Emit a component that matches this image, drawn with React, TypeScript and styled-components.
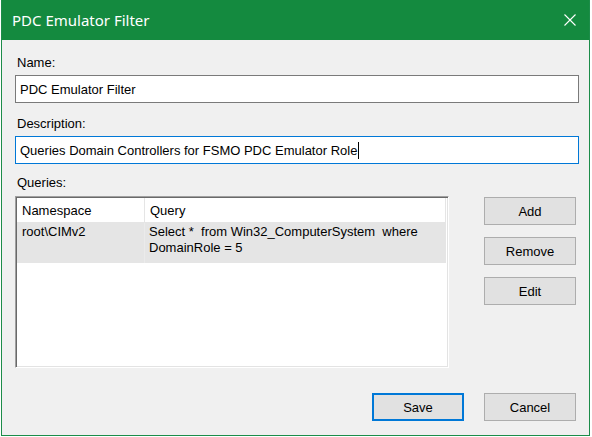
import React from 'react';
import styled, { createGlobalStyle } from 'styled-components';

const GlobalStyle = createGlobalStyle`
  html, body {
    margin: 0;
    padding: 0;
    background: #fff;
  }
  * {
    box-sizing: border-box;
  }
`;

const Window = styled.div`
  width: 589px;
  height: 436px;
  margin-left: 1px;
  border: 1px solid #1c8c49;
  border-top: none;
  background: #f0f0f0;
  display: flex;
  flex-direction: column;
  font-family: "Liberation Sans", Arial, sans-serif;
  font-size: 13px;
  color: #000;
`;

const TitleBar = styled.div`
  height: 40px;
  flex-shrink: 0;
  background: #148a3f;
  display: flex;
  align-items: center;
  justify-content: space-between;
  padding: 0 13px 0 10px;
`;

const Title = styled.span`
  font-family: "Noto Sans", "Open Sans", sans-serif;
  font-size: 15px;
  color: #fff;
  margin-top: -1px;
`;

const CloseIcon = styled.svg`
  width: 12px;
  height: 12px;
  display: block;
`;

const Body = styled.div`
  flex: 1;
  display: flex;
  flex-direction: column;
  padding: 15px 10px 0 13px;
`;

const Label = styled.div<{ $gap?: number }>`
  line-height: 16px;
  margin-top: ${p => p.$gap ?? 0}px;
  margin-left: 2px;
`;

const TextBox = styled.div<{ $focused?: boolean }>`
  height: 28px;
  margin-top: 4px;
  background: #fff;
  border: 1px solid ${p => (p.$focused ? '#0078d7' : '#7a7a7a')};
  display: flex;
  align-items: center;
  padding-left: 4px;
  white-space: nowrap;
`;

const Caret = styled.span`
  display: inline-block;
  width: 1px;
  height: 17px;
  background: #000;
  margin-left: 1px;
`;

const QueriesArea = styled.div`
  display: flex;
  margin-top: 5px;
`;

const ListView = styled.div`
  width: 434px;
  height: 172px;
  background: #fff;
  border-top: 1px solid #a0a0a0;
  border-left: 1px solid #a0a0a0;
  border-right: 1px solid #fff;
  border-bottom: 1px solid #fff;
  box-shadow: inset 1px 1px 0 #696969, inset -1px -1px 0 #e3e3e3;
  padding: 1px 1px 0 1px;
  display: flex;
  flex-direction: column;
`;

const ListHeader = styled.div`
  display: flex;
  height: 25px;
  border-bottom: 1px solid #e5e5e5;
  border-right: 1px solid #e5e5e5;
  margin-right: 1px;
`;

const HeaderCell = styled.div<{ $width?: number }>`
  ${p => (p.$width ? `width: ${p.$width}px;` : 'flex: 1;')}
  display: flex;
  align-items: center;
  padding-left: 5px;
  border-right: ${p => (p.$width ? '1px solid #e5e5e5' : 'none')};
`;

const ListRow = styled.div`
  display: flex;
  height: 40px;
  background: #e5e5e5;
  margin-right: 1px;
`;

const RowCell = styled.div<{ $width?: number }>`
  ${p => (p.$width ? `width: ${p.$width}px;` : 'flex: 1;')}
  padding: 1px 0 0 ${p => (p.$width ? 5 : 4)}px;
  line-height: 16px;
  border-right: ${p => (p.$width ? '1px solid #ebebeb' : 'none')};
`;

const ButtonColumn = styled.div`
  display: flex;
  flex-direction: column;
  gap: 12px;
  margin-left: auto;
  margin-right: 3px;
  padding-top: 1px;
`;

const Button = styled.button<{ $default?: boolean }>`
  width: 92px;
  height: 28px;
  background: #e1e1e1;
  border: ${p => (p.$default ? '2px solid #0078d7' : '1px solid #adadad')};
  font-family: "Liberation Sans", Arial, sans-serif;
  font-size: 13px;
  color: #000;
  padding: 0;
  display: flex;
  align-items: center;
  justify-content: center;
`;

const Footer = styled.div`
  display: flex;
  justify-content: flex-end;
  gap: 20px;
  margin-top: 25px;
  margin-right: 3px;
`;

const App: React.FC = () => {
  return (
    <>
      <GlobalStyle />
      <Window>
        <TitleBar>
          <Title>PDC Emulator Filter</Title>
          <CloseIcon viewBox="0 0 12 12">
            <path d="M0.5 0.5 L11.5 11.5 M11.5 0.5 L0.5 11.5" stroke="#fff" strokeWidth="1.1" />
          </CloseIcon>
        </TitleBar>
        <Body>
          <Label>Name:</Label>
          <TextBox>PDC Emulator Filter</TextBox>
          <Label $gap={13}>Description:</Label>
          <TextBox $focused>
            Queries Domain Controllers for FSMO PDC Emulator Role
            <Caret />
          </TextBox>
          <Label $gap={11}>Queries:</Label>
          <QueriesArea>
            <ListView>
              <ListHeader>
                <HeaderCell $width={128}>Namespace</HeaderCell>
                <HeaderCell>Query</HeaderCell>
              </ListHeader>
              <ListRow>
                <RowCell $width={128}>root\CIMv2</RowCell>
                <RowCell>
                  Select * &nbsp;from Win32_ComputerSystem &nbsp;where
                  <br />
                  DomainRole = 5
                </RowCell>
              </ListRow>
            </ListView>
            <ButtonColumn>
              <Button>Add</Button>
              <Button>Remove</Button>
              <Button>Edit</Button>
            </ButtonColumn>
          </QueriesArea>
          <Footer>
            <Button $default>Save</Button>
            <Button>Cancel</Button>
          </Footer>
        </Body>
      </Window>
    </>
  );
};

export default App;
